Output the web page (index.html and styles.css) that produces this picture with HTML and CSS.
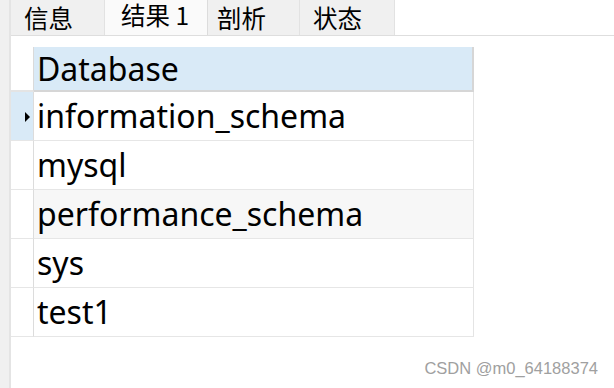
FILE: index.html
```html
<!DOCTYPE html>
<html>
<head>
<meta charset="utf-8">
<link rel="stylesheet" href="styles.css">
</head>
<body>
<div class="side"></div>
<div class="main">
  <div class="tabs">
    <div class="tab">信息</div>
    <div class="tab active">结果 1</div>
    <div class="tab">剖析</div>
    <div class="tab">状态</div>
  </div>
  <div class="content">
    <div class="grid">
      <div class="ind head"></div><div class="cell head">Database</div>
      <div class="ind cur"><span class="arrow"></span></div><div class="cell">information_schema</div>
      <div class="ind"></div><div class="cell">mysql</div>
      <div class="ind"></div><div class="cell alt">performance_schema</div>
      <div class="ind"></div><div class="cell">sys</div>
      <div class="ind"></div><div class="cell">test1</div>
    </div>
    <div class="mark">CSDN @m0_64188374</div>
  </div>
</div>
</body>
</html>
```
FILE: styles.css
```css
* { box-sizing: border-box; }
html, body { margin: 0; height: 100%; }
body {
  display: flex;
  width: 614px;
  height: 388px;
  background: #fff;
  font-family: "Noto Sans", "Noto Sans CJK SC", sans-serif;
  overflow: hidden;
}
.side {
  width: 11px;
  background: #f0f0f0;
  border-right: 2px solid #e4e4e4;
  flex: none;
}
.main {
  flex: 1;
  display: flex;
  flex-direction: column;
}
.tabs {
  display: flex;
  height: 36px;
  border-bottom: 1px solid #dedede;
  background: #fff;
}
.tab {
  font-family: "Noto Sans CJK SC", sans-serif;
  font-size: 24.5px;
  line-height: 31px;
  color: #000;
  background: #f0f0f0;
  border-right: 1px solid #e2e2e2;
  padding: 2px 0 0 13px;
  width: 94px;
}
.tab.active {
  background: #fafafa;
  padding-top: 0;
  line-height: 30px;
  padding-left: 16px;
  width: 103px;
  border-right: 1px solid #dcdcdc;
}
.tab:nth-child(3) { width: 92px; padding-left: 9px; }
.tab:nth-child(4) { width: 95px; padding-left: 13px; }
.content {
  flex: 1;
  position: relative;
  padding-top: 11px;
}
.grid {
  display: grid;
  grid-template-columns: 23px 440px;
  grid-template-rows: 45px;
  grid-auto-rows: 49px;
}
.ind {
  border-right: 1px solid #dcdcdc;
  border-bottom: 1px solid #e6e6e6;
  position: relative;
}
.ind.head { border-bottom: 2px solid #e4e4e4; border-right: 1px solid #dadada; background: #fff; }
.ind.cur { background: #d9eaf7; }
.arrow {
  position: absolute;
  right: 3px;
  top: 20px;
  width: 0; height: 0;
  border-top: 5px solid transparent;
  border-bottom: 5px solid transparent;
  border-left: 5px solid #000;
}
.cell {
  font-size: 32px;
  line-height: 47px;
  color: #000;
  padding-left: 3px;
  border-right: 1px solid #e4e4e4;
  border-bottom: 1px solid #e6e6e6;
  white-space: nowrap;
}
.cell.head {
  background: #d9eaf7;
  border-right: 2px solid #d6d6d6;
  border-bottom: 2px solid #d6d6d6;
  line-height: 44px;
}
.cell.alt { background: #f7f7f7; }
.mark {
  position: absolute;
  right: 16px;
  bottom: 10px;
  font-family: "Liberation Sans", Arial, sans-serif;
  font-size: 16.5px;
  color: #a0a0a0;
}
```
